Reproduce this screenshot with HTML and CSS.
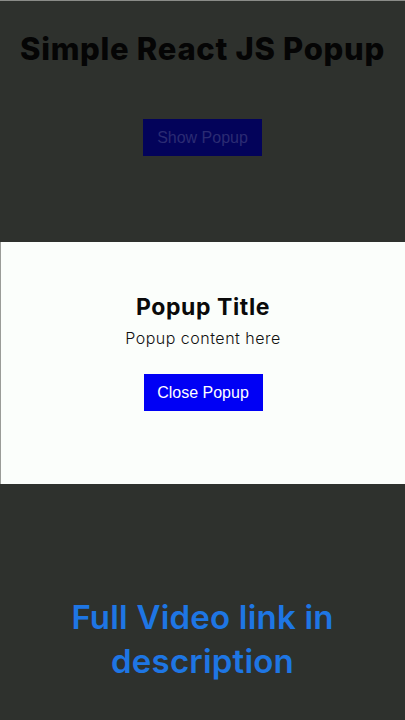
FILE: index.html
```html
<!DOCTYPE html>
<html lang="en">
<head>
  <meta charset="UTF-8">
  <meta name="viewport" content="width=device-width, initial-scale=1.0">
  <title>Simple React JS Popup</title>
  <link rel="stylesheet" href="styles.css">
</head>
<body>
  <div class="app">
    <h1>Simple React JS Popup</h1>
    <button class="show-btn">Show Popup</button>
  </div>

  <div class="popup">
    <h2>Popup Title</h2>
    <p>Popup content here</p>
    <button class="close-btn">Close Popup</button>
  </div>

  <div class="caption">Full Video link in description</div>
</body>
</html>
```

FILE: styles.css
```css
body {
  margin: 0;
  background-color: #2e312d;
  font-family: Inter, 'Noto Sans', sans-serif;
  height: 720px;
  overflow: hidden;
  border-top: 1px solid #8a8c88;
  box-sizing: border-box;
}

.app {
  height: 241px;
  display: flex;
  flex-direction: column;
  align-items: center;
}

.app h1 {
  margin: 29px 0 0;
  font-size: 31px;
  font-weight: 800;
  letter-spacing: 0.7px;
  white-space: nowrap;
  color: #050505;
}

button {
  border: none;
  font-family: 'Liberation Sans', Arial, sans-serif;
  font-size: 16px;
  padding: 0;
  width: 119px;
  height: 37px;
  cursor: pointer;
}

.show-btn {
  margin-top: 52px;
  background-color: #03035a;
  color: #2b2b73;
}

.popup {
  height: 242px;
  background-color: #fbfefb;
  border-left: 1px solid #9a9c98;
  display: flex;
  flex-direction: column;
  align-items: center;
}

.popup h2 {
  margin: 51px 0 0;
  font-size: 23px;
  font-weight: 700;
  letter-spacing: 0.6px;
  color: #0a0a0a;
}

.popup p {
  margin: 7px 0 0;
  font-size: 16px;
  font-weight: 300;
  letter-spacing: 0.5px;
  color: #111;
}

.close-btn {
  margin-top: 26px;
  background-color: #0000f5;
  color: #fff;
}

.caption {
  width: 320px;
  margin: 111px auto 0;
  text-align: center;
  font-size: 33px;
  font-weight: 600;
  line-height: 44px;
  letter-spacing: 0.2px;
  color: #1e76e4;
}
```
